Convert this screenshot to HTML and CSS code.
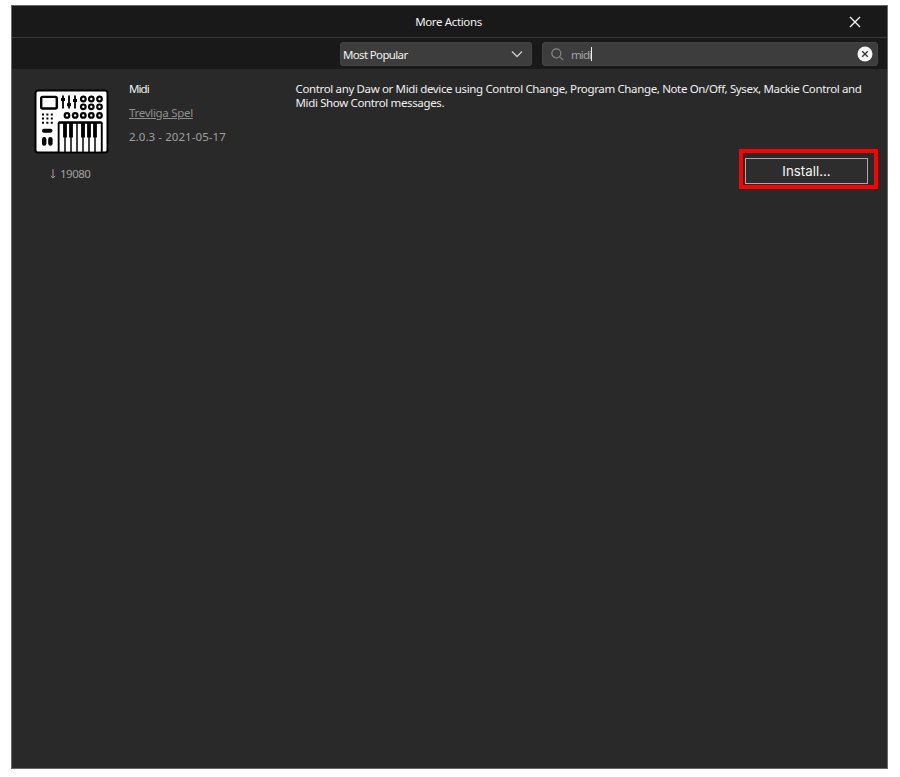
FILE: index.html
```html
<!DOCTYPE html>
<html lang="en">
<head>
  <meta charset="UTF-8" />
  <meta name="viewport" content="width=device-width, initial-scale=1.0"/>
  <title>More Actions</title>
  <link rel="stylesheet" href="styles.css">
</head>
<body>
  <div class="window">
    <header class="titlebar">
      <span class="title">More Actions</span>
      <svg class="close" width="12" height="12" viewBox="0 0 12 12"><path d="M1 1L11 11M11 1L1 11"/></svg>
    </header>

    <div class="toolbar">
      <div class="select">
        <span class="select-label">Most Popular</span>
        <svg class="chevron" width="12" height="8" viewBox="0 0 12 8"><path d="M1 1.5L6 6.5L11 1.5"/></svg>
      </div>
      <div class="search">
        <svg class="magnifier" width="13" height="13" viewBox="0 0 13 13"><circle cx="5.3" cy="5.3" r="4.5"/><path d="M8.6 8.6L12.2 12.2"/></svg>
        <span class="query">midi</span><span class="caret"></span>
        <svg class="clear" width="16" height="16" viewBox="0 0 16 16"><circle cx="8" cy="8" r="7.5"/><path d="M5.2 5.2L10.8 10.8M10.8 5.2L5.2 10.8"/></svg>
      </div>
    </div>

    <div class="plugin">
      <div class="cover">
        <svg class="midi-icon" width="75" height="65" viewBox="0 0 75 65">
          <rect class="case" x="1.5" y="1.5" width="72" height="62" rx="2.5"/>
          <rect class="screen" x="7.2" y="7.9" width="15.6" height="11.6" rx="1.5"/>
          <path class="sliders" d="M29 6.5V19.5M35 6.5V19.5M41 6.5V19.5"/>
          <path class="handles" d="M27 10.5H31M33 15.8H37M39 11.5H43"/>
          <g class="knobs">
            <circle cx="49.3" cy="10" r="2.3"/><circle cx="57.3" cy="10" r="2.3"/><circle cx="65.5" cy="10" r="2.3"/>
            <circle cx="49.3" cy="17.8" r="2.3"/><circle cx="57.3" cy="17.8" r="2.3"/><circle cx="65.5" cy="17.8" r="2.3"/>
            <circle cx="33" cy="26.4" r="2.3"/><circle cx="41.2" cy="26.4" r="2.3"/><circle cx="49.3" cy="26.4" r="2.3"/><circle cx="57.3" cy="26.4" r="2.3"/><circle cx="65.5" cy="26.4" r="2.3"/>
          </g>
          <path class="dots" d="M8 25.4H19M8 29.6H19M8 33.8H19"/>
          <rect x="8" y="39.7" width="10.5" height="4" rx="2"/>
          <rect x="8" y="48" width="4.4" height="8.8" rx="2.2"/>
          <rect x="14.2" y="48" width="4.4" height="8.8" rx="2.2"/>
          <path d="M23.7 63V34.3a2 2 0 0 1 2-2H66.7a2 2 0 0 1 2 2V63Z"/>
          <rect class="keys" x="25.6" y="34.8" width="41.2" height="27.8"/>
          <path class="gaps" d="M31 34V63M37 34V63M43 34V63M49 34V63M55 34V63M61 34V63"/>
          <path class="sharps" d="M31 34V48.5M37 34V48.5M49 34V48.5M55 34V48.5M61 34V48.5"/>
        </svg>
        <div class="downloads"><svg class="arrow" width="6" height="10" viewBox="0 0 6 10"><path d="M3 0V9M.7 6.8L3 9.1L5.3 6.8"/></svg>19080</div>
      </div>
      <div class="info">
        <div class="name">Midi</div>
        <a class="author">Trevliga Spel</a>
        <div class="version">2.0.3 - 2021-05-17</div>
      </div>
      <div class="details">
        <p class="description">Control any Daw or Midi device using Control Change, Program Change, Note On/Off, Sysex, Mackie Control and<br>Midi Show Control messages.</p>
        <div class="highlight"><button class="install">Install...</button></div>
      </div>
    </div>
  </div>
</body>
</html>
```

FILE: styles.css
```css
* {
  box-sizing: border-box;
}

body {
  margin: 0;
  padding: 5px 12px 8px 11px;
  height: 777px;
  background: #fff;
  font-family: "Noto Sans", sans-serif;
  font-size: 11.5px;
  letter-spacing: -0.36px;
  color: #f0f0f0;
}

svg {
  display: block;
  flex: none;
}

.window {
  height: 764px;
  background: #292929;
  border: 1px solid #686a6a;
}

.titlebar {
  position: relative;
  display: flex;
  align-items: center;
  justify-content: center;
  height: 32px;
  background: #191919;
  border-bottom: 1px solid #393939;
}

.title {
  padding-right: 2px;
}

.close {
  position: absolute;
  right: 26px;
  top: 10px;
  fill: none;
  stroke: #f4f4f4;
  stroke-width: 1.4;
}

.toolbar {
  display: flex;
  gap: 10px;
  height: 31px;
  padding: 4px 9px 3px 328px;
  background: #191919;
}

.select,
.search {
  display: flex;
  align-items: center;
  height: 24px;
  background: #3d3d3d;
  border: 1px solid #444;
  border-radius: 3px;
}

.select {
  width: 192px;
  justify-content: space-between;
  padding: 0 8px 0 2px;
}

.select-label {
  letter-spacing: -0.65px;
}

.chevron {
  fill: none;
  stroke: #ccc;
  stroke-width: 1.3;
}

.search {
  flex: 1;
  padding: 0 4px 0 8px;
}

.magnifier {
  fill: none;
  stroke: #858585;
  stroke-width: 1.2;
}

.query {
  margin-left: 7px;
  color: #a5a5a5;
  letter-spacing: -0.9px;
}

.caret {
  width: 1px;
  height: 14px;
  background: #f0f0f0;
}

.clear {
  margin-left: auto;
  fill: #f5f5f5;
}

.clear path {
  stroke: #333;
  stroke-width: 1.3;
}

.plugin {
  display: flex;
  padding: 20px 9px 0 22px;
}

.cover {
  width: 95px;
}

.case {
  fill: #fff;
  stroke: #000;
  stroke-width: 2;
}

.screen {
  fill: #fff;
  stroke: #000;
  stroke-width: 2.4;
}

.sliders {
  stroke: #000;
  stroke-width: 1.8;
}

.handles {
  stroke: #000;
  stroke-width: 3;
}

.knobs {
  fill: #fff;
  stroke: #000;
  stroke-width: 2.2;
}

.dots {
  stroke: #000;
  stroke-width: 2;
  stroke-dasharray: 2 2.4;
}

.keys {
  fill: #fff;
}

.gaps {
  stroke: #000;
  stroke-width: 1.5;
}

.sharps {
  stroke: #000;
  stroke-width: 3.8;
}

.downloads {
  display: flex;
  align-items: center;
  gap: 4px;
  margin: 12px 0 0 16px;
  line-height: 16px;
  color: #a0a0a0;
  letter-spacing: -0.5px;
}

.arrow {
  fill: none;
  stroke: #a0a0a0;
}

.info {
  width: 166px;
  margin-top: -8px;
  line-height: 16px;
}

.name {
  letter-spacing: -0.9px;
}

.author {
  display: block;
  margin: 8px 0;
  color: #8e8e8e;
  text-decoration: underline;
  letter-spacing: -0.3px;
}

.version {
  color: #a0a0a0;
  letter-spacing: 0.07px;
}

.details {
  display: flex;
  flex: 1;
  flex-direction: column;
  margin-top: -7px;
}

.description {
  height: 67px;
  margin: 0;
  padding-left: 0.5px;
  line-height: 14px;
  white-space: nowrap;
}

.highlight {
  align-self: flex-end;
  width: 139px;
  height: 40px;
  padding: 5px 6px 4px 2px;
  border: 4px solid #f00;
}

.install {
  display: block;
  width: 123px;
  height: 26px;
  padding: 0;
  background: #2d2d2d;
  border: 1px solid #aaa;
  color: #f5f5f5;
  font: 13.3px "Inter", sans-serif;
}
```
